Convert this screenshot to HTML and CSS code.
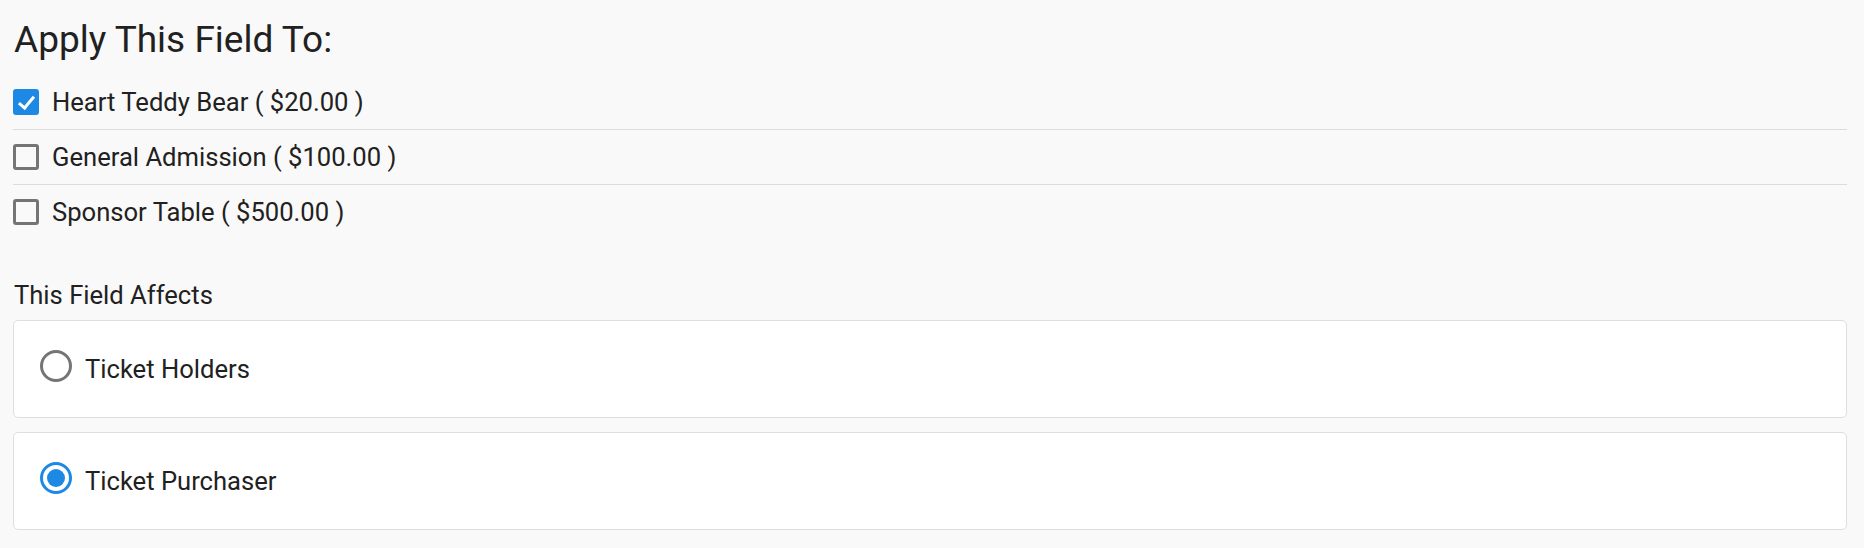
FILE: index.html
```html
<!DOCTYPE html>
<html lang="en">

<head>
    <meta charset="UTF-8">
    <meta name="viewport" content="width=device-width, initial-scale=1.0">
    <title>Field Settings</title>
    <link rel="stylesheet" href="styles.css">
</head>

<body>
    <div class="panel">
        <h2 class="title">Apply This Field To:</h2>

        <ul class="ticket_list">
            <li class="ticket_row">
                <label><input type="checkbox" checked /> Heart Teddy Bear ( $20.00 )</label>
            </li>
            <li class="ticket_row">
                <label><input type="checkbox" /> General Admission ( $100.00 )</label>
            </li>
            <li class="ticket_row">
                <label><input type="checkbox" /> Sponsor Table ( $500.00 )</label>
            </li>
        </ul>

        <div class="affects_label">This Field Affects</div>

        <label class="affects_card">
            <input type="radio" name="affects" value="holders" />
            Ticket Holders
        </label>
        <label class="affects_card">
            <input type="radio" name="affects" value="purchaser" checked />
            Ticket Purchaser
        </label>
    </div>
</body>

</html>
```

FILE: styles.css
```css
body {
    margin: 0;
    background-color: #f9f9f9;
    color: #212121;
    font-family: Roboto, "Liberation Sans", sans-serif;
}

.panel {
    margin: 0 17px 0 13px;
}

.title {
    font-size: 37px;
    font-weight: 400;
    line-height: 1.2;
    margin: 18px 0 13px 1px;
}

.ticket_list {
    list-style: none;
    margin: 0;
    padding: 0;
}

.ticket_row {
    height: 54px;
    border-bottom: 1px solid #dcdcdc;
    display: flex;
    align-items: center;
}

.ticket_row:last-child {
    border-bottom: none;
}

.ticket_row label {
    display: flex;
    align-items: center;
    gap: 13px;
    font-size: 25.6px;
}

input[type="checkbox"] {
    appearance: none;
    margin: 0;
    width: 26px;
    height: 26px;
    border: 3px solid #757575;
    border-radius: 3px;
    box-sizing: border-box;
    position: relative;
}

input[type="checkbox"]:checked {
    background-color: #1e88e5;
    border-color: #1e88e5;
}

input[type="checkbox"]:checked::after {
    content: "";
    position: absolute;
    left: 6px;
    top: 1px;
    width: 6px;
    height: 13px;
    border: solid white;
    border-width: 0 3px 3px 0;
    transform: rotate(40deg);
}

.affects_label {
    font-size: 25.6px;
    line-height: 1.2;
    margin: 41px 0 9px 1px;
}

.affects_card {
    display: flex;
    align-items: center;
    gap: 13px;
    height: 96px;
    padding-left: 26px;
    margin-bottom: 14px;
    background-color: white;
    border: 1px solid #dedede;
    border-radius: 5px;
    font-size: 25.6px;
}

input[type="radio"] {
    appearance: none;
    margin: 0 0 6px 0;
    width: 32px;
    height: 32px;
    border: 3px solid #757575;
    border-radius: 50%;
    box-sizing: border-box;
    display: grid;
    place-content: center;
}

input[type="radio"]:checked {
    border-color: #1e88e5;
}

input[type="radio"]:checked::before {
    content: "";
    width: 18px;
    height: 18px;
    border-radius: 50%;
    background-color: #1e88e5;
}
```
